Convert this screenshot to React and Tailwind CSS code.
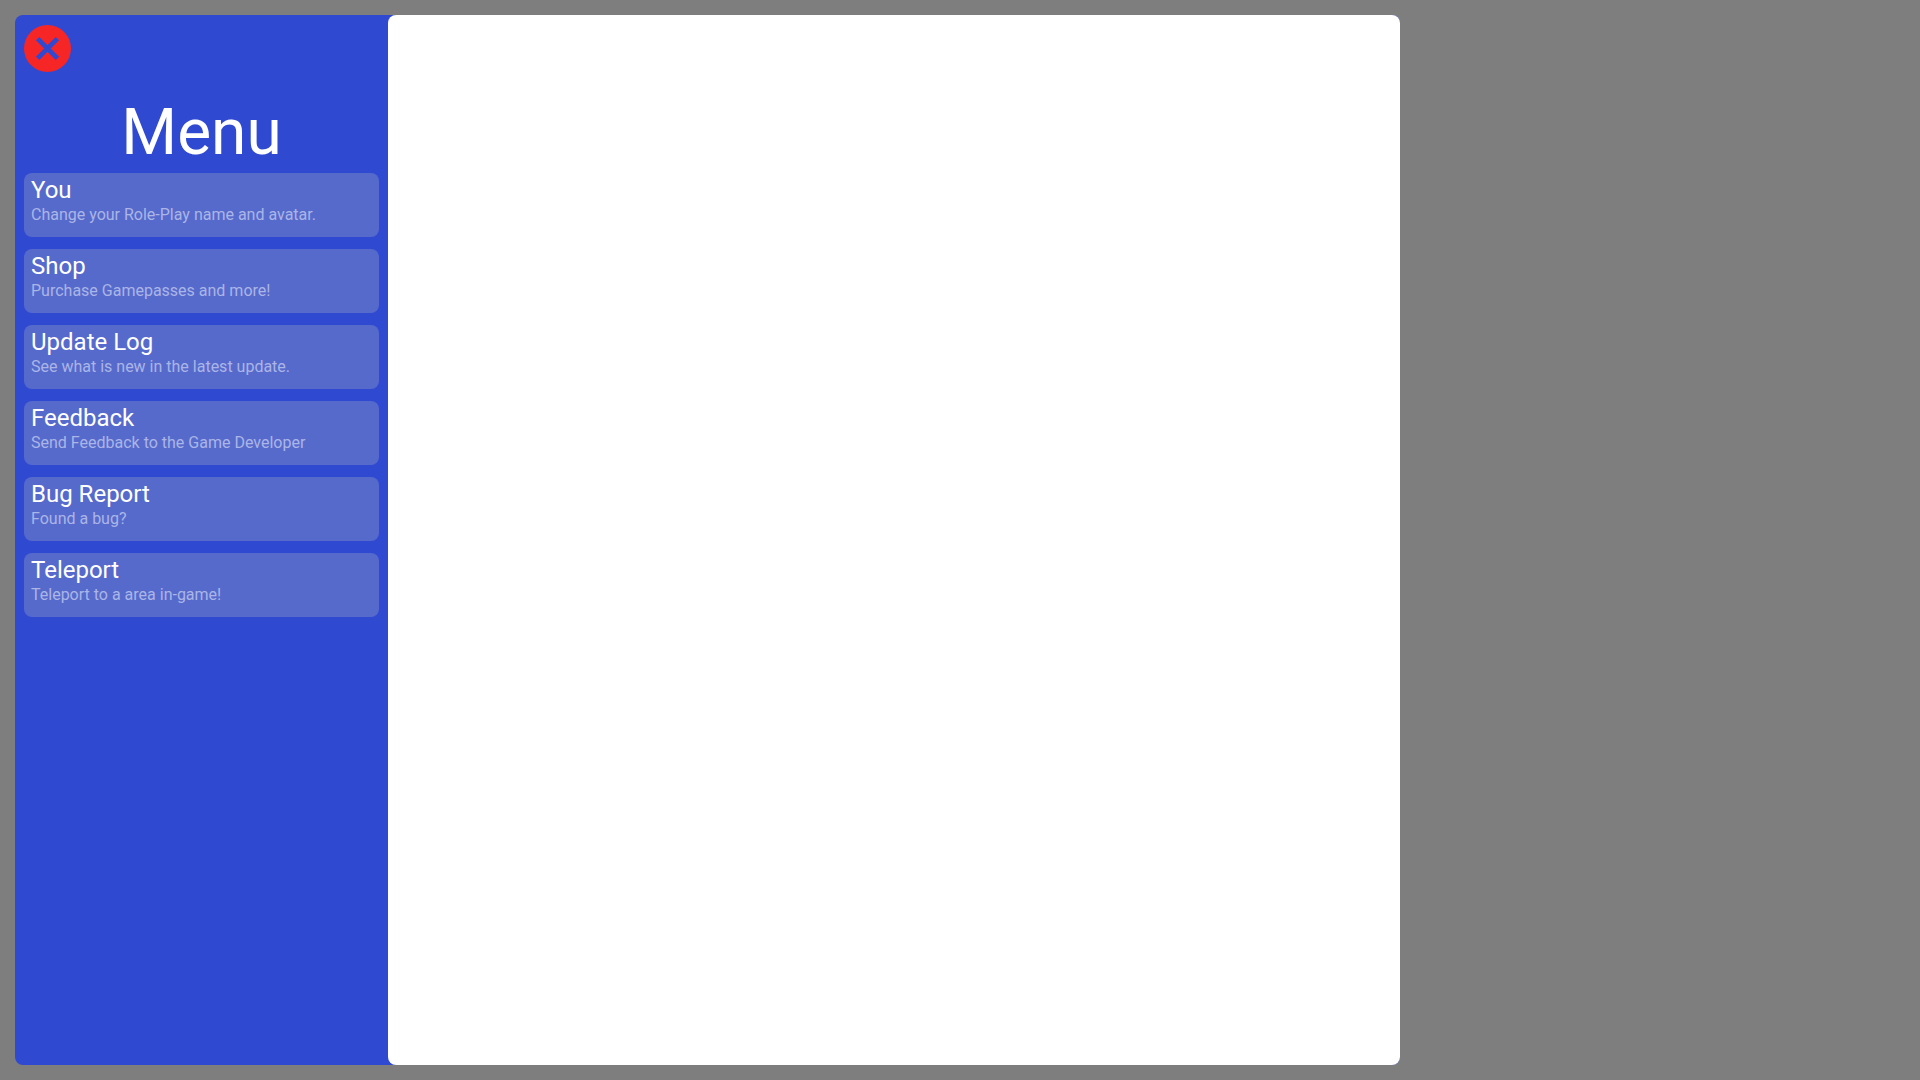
import React, { useState } from "react";

const menuItems = [
  { id: 'you', title: 'You', description: 'Change your Role-Play name and avatar.' },
  { id: 'shop', title: 'Shop', description: 'Purchase Gamepasses and more!' },
  { id: 'updates', title: 'Update Log', description: 'See what is new in the latest update.' },
  { id: 'feedback', title: 'Feedback', description: 'Send Feedback to the Game Developer' },
  { id: 'bugs', title: 'Bug Report', description: 'Found a bug?' },
  { id: 'teleport', title: 'Teleport', description: 'Teleport to a area in-game!' },
];

function CloseIcon() {
  return (
    <svg viewBox="0 0 47 47" className="block w-full h-full" aria-hidden="true">
      <circle cx="23.5" cy="23.5" r="23.5" fill="#f72626" />
      <path d="M13.6 13.6 L33.4 33.4 M33.4 13.6 L13.6 33.4" stroke="#2f49d1" strokeWidth="4.8" />
    </svg>
  );
}

function MenuItem({ item, onSelect }) {
  return (
    <li>
      <button
        type="button"
        onClick={() => onSelect(item.id)}
        className="flex flex-col gap-px w-full h-16 px-[7px] pt-[5px] rounded-lg bg-[#566acc] text-left cursor-pointer"
      >
        <span className="text-2xl leading-6 text-white">{item.title}</span>
        <span className="text-base leading-6 text-[#abb5e6]">{item.description}</span>
      </button>
    </li>
  );
}

function App() {
  const [open, setOpen] = useState(true);
  const [selected, setSelected] = useState(null);

  return (
    <main className="flex min-h-screen p-[15px] bg-[#7e7e7e] font-['Roboto',sans-serif]">
      {open && (
        <div className="flex w-full max-w-[1385px] rounded-lg bg-[#2f49d1]">
          <nav aria-label="Menu" className="w-[373px] shrink-0 px-[9px] pt-[10px]">
            <button
              type="button"
              aria-label="Close menu"
              onClick={() => setOpen(false)}
              className="block w-[47px] h-[47px] rounded-full cursor-pointer"
            >
              <CloseIcon />
            </button>

            <h1 className="mt-[29px] mb-2 text-[64px] leading-16 text-center text-white">Menu</h1>

            <ul className="flex flex-col gap-3">
              {menuItems.map((item) => (
                <MenuItem key={item.id} item={item} onSelect={setSelected} />
              ))}
            </ul>
          </nav>

          <section className="flex-1 rounded-lg bg-white" data-page={selected}></section>
        </div>
      )}
    </main>
  );
}

export default App;
